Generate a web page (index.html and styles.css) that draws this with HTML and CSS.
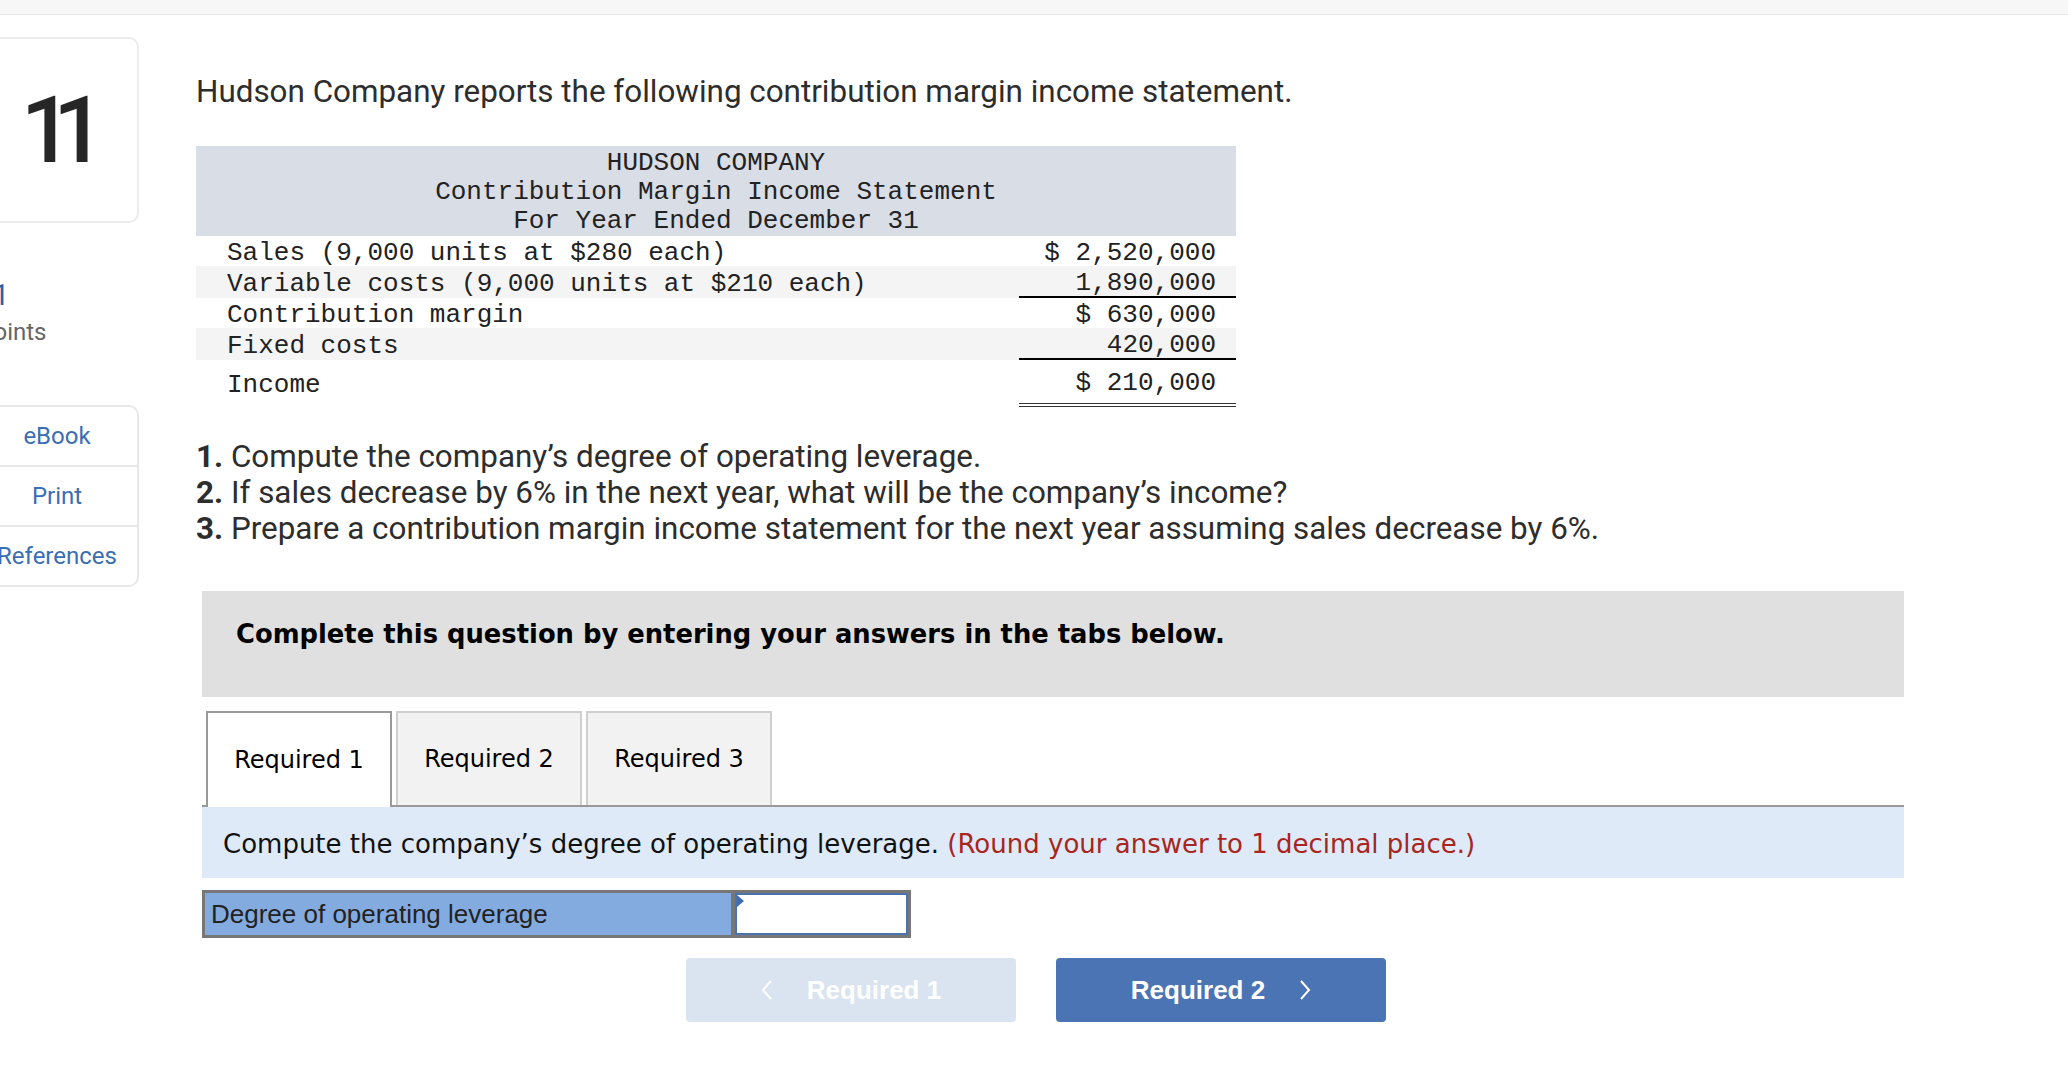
FILE: index.html
```html
<!DOCTYPE html>
<html lang="en">
<head>
    <meta charset="UTF-8">
    <meta name="viewport" content="width=device-width, initial-scale=1.0">
    <title>Question 11</title>
    <link rel="stylesheet" href="styles.css">
</head>
<body>
    <div class="topbar"></div>

    <div class="page">
        <aside class="side">
            <div class="qnum">11</div>
            <div class="points">
                <div class="points-value">1</div>
                <div class="points-label">points</div>
            </div>
            <ul class="tools">
                <li><a href="#">eBook</a></li>
                <li><a href="#">Print</a></li>
                <li><a href="#">References</a></li>
            </ul>
        </aside>

        <main class="main">
            <p class="intro">Hudson Company reports the following contribution margin income statement.</p>

            <table class="statement">
                <thead>
                    <tr>
                        <th colspan="2">HUDSON COMPANY<br>Contribution Margin Income Statement<br>For Year Ended December 31</th>
                    </tr>
                </thead>
                <tbody>
                    <tr>
                        <td class="label">Sales (9,000 units at $280 each)</td>
                        <td class="value">$ 2,520,000</td>
                    </tr>
                    <tr class="shade">
                        <td class="label">Variable costs (9,000 units at $210 each)</td>
                        <td class="value underline">1,890,000</td>
                    </tr>
                    <tr>
                        <td class="label">Contribution margin</td>
                        <td class="value">$ 630,000</td>
                    </tr>
                    <tr class="shade">
                        <td class="label">Fixed costs</td>
                        <td class="value underline">420,000</td>
                    </tr>
                    <tr class="total">
                        <td class="label">Income</td>
                        <td class="value double">$ 210,000</td>
                    </tr>
                </tbody>
            </table>

            <ol class="tasks">
                <li><b>1.</b> Compute the company’s degree of operating leverage.</li>
                <li><b>2.</b> If sales decrease by 6% in the next year, what will be the company’s income?</li>
                <li><b>3.</b> Prepare a contribution margin income statement for the next year assuming sales decrease by 6%.</li>
            </ol>

            <section class="answer">
                <div class="notice">Complete this question by entering your answers in the tabs below.</div>

                <div class="tabs">
                    <div class="tab active">Required 1</div>
                    <div class="tab">Required 2</div>
                    <div class="tab">Required 3</div>
                </div>

                <div class="instruction">
                    Compute the company’s degree of operating leverage. <span class="hint">(Round your answer to 1 decimal place.)</span>
                </div>

                <div class="answer-row">
                    <div class="answer-label">Degree of operating leverage</div>
                    <div class="answer-input">
                        <span class="marker"></span>
                        <input type="text" aria-label="Degree of operating leverage">
                    </div>
                </div>

                <div class="nav-buttons">
                    <button class="nav-btn disabled" disabled>
                        <svg width="12" height="20" viewBox="0 0 12 20"><polyline points="10,1 2,10 10,19" fill="none" stroke="#fff" stroke-width="2"/></svg>
                        <span>Required 1</span>
                    </button>
                    <button class="nav-btn">
                        <span>Required 2</span>
                        <svg width="12" height="20" viewBox="0 0 12 20"><polyline points="2,1 10,10 2,19" fill="none" stroke="#fff" stroke-width="2"/></svg>
                    </button>
                </div>
            </section>
        </main>
    </div>
</body>
</html>
```

FILE: styles.css
```css
body {
    margin: 0;
    padding: 0;
    background: #fff;
    font-family: Roboto, "Liberation Sans", sans-serif;
    color: #2d2d2d;
    overflow: hidden;
}

.topbar {
    height: 14px;
    background-color: #f7f7f7;
    border-bottom: 1px solid #e6e6e6;
}

.page {
    display: flex;
    align-items: flex-start;
}

/* left column */

.side {
    width: 162px;
    margin-left: -23px;
    padding-top: 22px;
    flex-shrink: 0;
}

.qnum {
    height: 186px;
    box-sizing: border-box;
    border: 2px solid #ececec;
    border-radius: 10px;
    display: flex;
    justify-content: center;
    align-items: center;
    padding-right: 10px;
    font-size: 92px;
    font-weight: 500;
    letter-spacing: -20px;
    color: #262626;
}

.points {
    margin-top: 57px;
    padding-left: 3px;
}

.points-value {
    font-size: 29px;
    line-height: 30px;
    color: #2f5da3;
    padding-left: 13px;
}

.points-label {
    margin-top: 9px;
    font-size: 24px;
    line-height: 26px;
    color: #666;
}

.tools {
    list-style: none;
    margin: 60px 0 0;
    padding: 0;
    border: 2px solid #e8e8e8;
    border-left: none;
    border-radius: 0 10px 10px 0;
}

.tools li {
    height: 58px;
    display: flex;
    justify-content: center;
    align-items: center;
    border-bottom: 2px solid #e8e8e8;
}

.tools li:last-child {
    border-bottom: none;
}

.tools a {
    font-size: 24px;
    color: #3b6db5;
    text-decoration: none;
}

/* main column */

.main {
    margin-left: 57px;
    padding-top: 57px;
    flex: 1;
}

.intro {
    margin: 0;
    font-size: 31.4px;
    line-height: 40px;
}

.statement {
    margin-top: 34px;
    width: 1040px;
    border-collapse: separate;
    border-spacing: 0;
    font-family: "Liberation Mono", "Courier New", monospace;
    font-size: 26px;
    color: #222;
}

.statement th {
    background-color: #d9dde5;
    font-weight: normal;
    line-height: 29px;
    padding: 3px 0 0;
    text-align: center;
}

.statement td {
    padding: 5px 0 0;
    line-height: 25px;
    white-space: pre;
}

.statement .shade td {
    background-color: #f4f4f4;
}

.statement .label {
    padding-left: 31px;
}

.statement .value {
    width: 197px;
    padding-right: 20px;
    text-align: right;
}

.statement .underline {
    border-bottom: 2px solid #000;
}

.statement .total td {
    padding-top: 11px;
    padding-bottom: 7px;
}

.statement .double {
    border-bottom: 4px double #333;
}

.tasks {
    list-style: none;
    margin: 32px 0 0;
    padding: 0;
    font-size: 31.4px;
    line-height: 36px;
}

/* answer area */

.answer {
    margin: 44px 0 0 6px;
    width: 1702px;
}

.notice {
    height: 106px;
    box-sizing: border-box;
    padding: 28px 34px 0;
    background-color: #e0e0e0;
    font-family: "DejaVu Sans", Verdana, sans-serif;
    font-weight: bold;
    font-size: 25.8px;
    color: #000;
}

.tabs {
    display: flex;
    gap: 4px;
    margin-top: 14px;
    padding-left: 4px;
    height: 94px;
    border-bottom: 2px solid #999;
}

.tab {
    width: 186px;
    height: 94px;
    box-sizing: border-box;
    border: 2px solid #cfcfcf;
    border-bottom: none;
    background-color: #f2f2f2;
    display: flex;
    justify-content: center;
    align-items: center;
    font-family: "DejaVu Sans", Verdana, sans-serif;
    font-size: 24px;
    color: #000;
}

.tab.active {
    height: 96px;
    background-color: #fff;
    border-color: #999;
}

.instruction {
    height: 71px;
    box-sizing: border-box;
    padding: 22px 21px 0;
    background-color: #deeaf7;
    font-family: "DejaVu Sans", Verdana, sans-serif;
    font-size: 26px;
    color: #111;
}

.hint {
    color: #a82520;
}

.answer-row {
    display: flex;
    width: 709px;
    height: 48px;
    margin-top: 12px;
    box-sizing: border-box;
    border: 3px solid #777;
}

.answer-label {
    flex: 1;
    background-color: #84abdf;
    border-right: 4px solid #777;
    padding-left: 6px;
    font-family: "Liberation Sans", Arial, sans-serif;
    font-size: 26px;
    line-height: 42px;
    color: #222;
}

.answer-input {
    width: 173px;
    position: relative;
}

.answer-input input {
    width: 100%;
    height: 100%;
    box-sizing: border-box;
    border: 2px solid #4a72b0;
    margin: 0;
    padding: 0 6px;
    font-size: 22px;
    outline: none;
}

.marker {
    position: absolute;
    left: 2px;
    top: 2px;
    width: 0;
    height: 0;
    border-top: 6px solid transparent;
    border-bottom: 6px solid transparent;
    border-left: 7px solid #3f6cb0;
}

.nav-buttons {
    display: flex;
    justify-content: center;
    gap: 40px;
    margin-top: 20px;
    padding-right: 34px;
}

.nav-btn {
    width: 330px;
    height: 64px;
    border: none;
    border-radius: 4px;
    background-color: #4a74b3;
    color: #fff;
    font-family: "Liberation Sans", Arial, sans-serif;
    font-weight: bold;
    font-size: 26px;
    display: flex;
    justify-content: center;
    align-items: center;
    gap: 34px;
    cursor: pointer;
}

.nav-btn.disabled {
    background-color: #dae4f0;
    cursor: default;
}
```
